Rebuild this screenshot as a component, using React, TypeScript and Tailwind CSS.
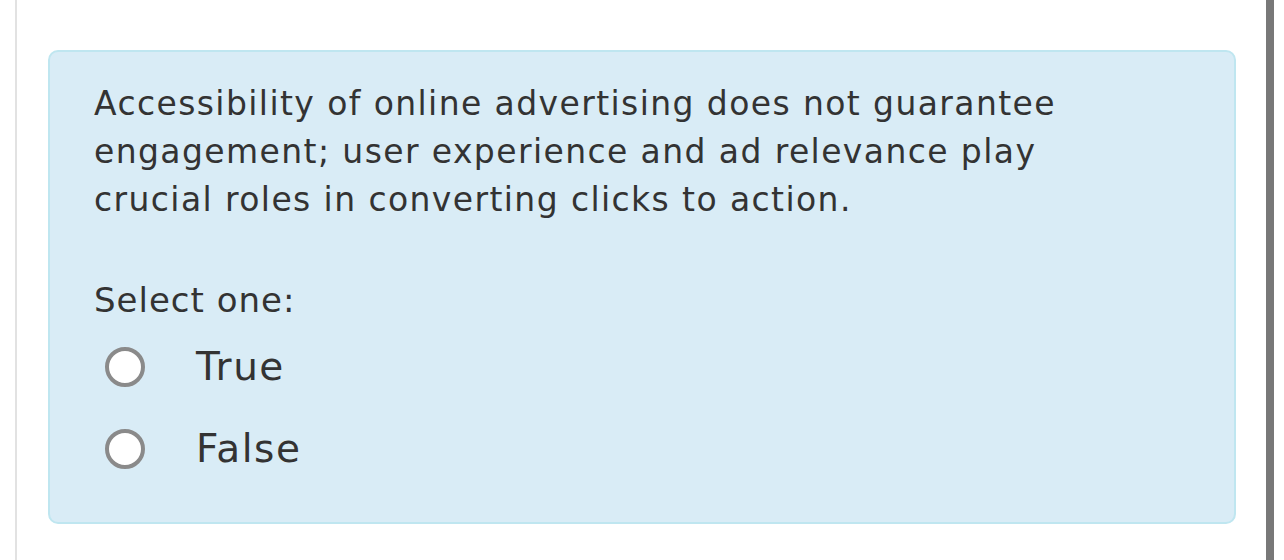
export default function App() {
  const options = ["True", "False"];
  return (
    <div className="flex h-[560px] w-[1284px] bg-white" style={{ fontFamily: '"DejaVu Sans", Verdana, sans-serif' }}>
      <div className="w-[15px] shrink-0" />
      <div className="w-[2px] shrink-0 bg-[#e2e2e2]" />
      <div className="w-[1220px] shrink-0 pl-[31px] pt-[50px]">
        <div className="h-[474px] w-[1188px] rounded-[10px] border-2 border-[#bfe6f0] bg-[#d9ecf6] pl-[44px] pt-[28px] text-[#333333]">
          <p className="w-[1000px] text-[33px] leading-[48px] tracking-[1.4px]">
            Accessibility of online advertising does not guarantee engagement; user experience and ad relevance play crucial roles in converting clicks to action.
          </p>
          <div className="mt-[52px] text-[34px] leading-[48px] tracking-[1px]">Select one:</div>
          <div className="mt-[2px] flex flex-col">
            {options.map((o) => (
              <label key={o} className="flex h-[82px] items-center">
                <span className="ml-[11px] h-[40px] w-[40px] shrink-0 rounded-full border-[4px] border-[#8a8a8a] bg-white" />
                <span className="ml-[51px] text-[39px] leading-[48px] tracking-[1.5px]">{o}</span>
              </label>
            ))}
          </div>
        </div>
      </div>
      <div className="w-[29px] shrink-0" />
      <div className="w-[8px] shrink-0 bg-[#787878]" />
      <div className="w-[10px] shrink-0" />
    </div>
  );
}
